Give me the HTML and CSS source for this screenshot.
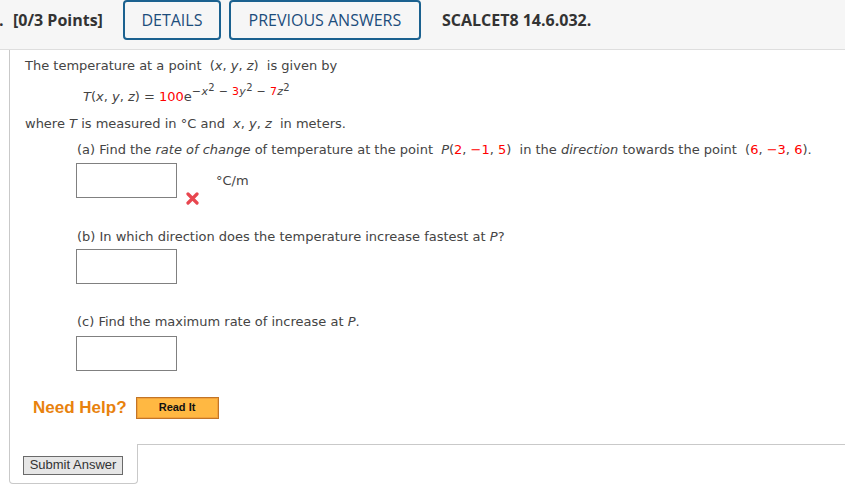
FILE: index.html
```html
<!DOCTYPE html>
<html>
<head>
<meta charset="utf-8">
<link rel="stylesheet" href="styles.css">
</head>
<body>
<div class="header">
  <span class="qnum">.</span>
  <span class="points">[0/3 Points]</span>
  <span class="hbtn btn-details">DETAILS</span>
  <span class="hbtn btn-prev">PREVIOUS ANSWERS</span>
  <span class="ref">SCALCET8 14.6.032.</span>
</div>
<div class="question">
  <div class="content">
    <p class="line line1">The temperature at a point <span class="m">(<i>x</i>, <i>y</i>, <i>z</i>)</span> is given by</p>
    <p class="line formula"><span class="m"><i>T</i>(<i>x</i>, <i>y</i>, <i>z</i>) = <span class="red">100</span>e<sup class="exp">−<i>x</i><sup class="sq">2</sup> − <span class="red">3</span><i>y</i><sup class="sq">2</sup> − <span class="red">7</span><i>z</i><sup class="sq">2</sup></sup></span></p>
    <p class="line line3">where <i>T</i> is measured in °C and <span class="m"><i>x</i>, <i>y</i>, <i>z</i></span> in meters.</p>
    <div class="part part-a">
      <p class="line">(a) Find the <i>rate of change</i> of temperature at the point <span class="m"><i>P</i>(<span class="red">2</span>, <span class="red">−1</span>, <span class="red">5</span>)</span> in the <i>direction</i> towards the point <span class="m m-end">(<span class="red">6</span>, <span class="red">−3</span>, <span class="red">6</span>)</span>.</p>
      <div class="answer-row">
        <span class="answer-box"></span>
        <svg class="xmark" width="13" height="13" viewBox="0 0 13 13"><path d="M2 2 L11 11 M11 2 L2 11" stroke="#e8464f" stroke-width="3.2" stroke-linecap="round"/></svg>
        <span class="unit">°C/m</span>
      </div>
    </div>
    <div class="part part-b">
      <p class="line">(b) In which direction does the temperature increase fastest at <i>P</i>?</p>
      <div class="answer-row">
        <span class="answer-box"></span>
      </div>
    </div>
    <div class="part part-c">
      <p class="line">(c) Find the maximum rate of increase at <i>P</i>.</p>
      <div class="answer-row">
        <span class="answer-box"></span>
      </div>
    </div>
    <div class="help">
      <span class="need-help">Need Help?</span>
      <span class="read-it">Read It</span>
    </div>
  </div>
  <div class="footer">
    <div class="footer-left">
      <span class="submit">Submit Answer</span>
    </div>
    <div class="footer-right"></div>
  </div>
</div>
</body>
</html>
```

FILE: styles.css
```css
html, body {
  margin: 0;
  padding: 0;
  background: #ffffff;
}

.header {
  display: flex;
  align-items: flex-start;
  height: 49px;
  background: #f6f6f6;
  border-bottom: 1px solid #dedede;
  font-family: "Open Sans", sans-serif;
  font-size: 16px;
  color: #333333;
}

.qnum {
  line-height: 40px;
  font-weight: 700;
  margin-left: -1px;
  width: 14px;
}

.points {
  line-height: 40px;
  font-weight: 700;
  margin-right: 20px;
}

.hbtn {
  box-sizing: border-box;
  height: 40px;
  line-height: 36px;
  border: 2px solid #1b618f;
  border-radius: 4px;
  color: #1c4d7c;
  text-align: center;
}

.btn-details {
  width: 98px;
}

.btn-prev {
  margin-left: 8px;
  width: 192px;
}

.ref {
  line-height: 40px;
  font-weight: 700;
  margin-left: 21px;
}

.question {
  margin-left: 9px;
}

.content {
  border-left: 1px solid #c9c9c9;
  padding: 7px 0 25px 15px;
  font-family: "DejaVu Sans", Verdana, sans-serif;
  font-size: 13px;
  color: #444444;
}

.line {
  margin: 0;
  line-height: 18px;
  white-space: nowrap;
}

.m {
  margin: 0 4px;
}

.m-end {
  margin-right: 0;
}

.red {
  color: #ff0000;
}

.formula {
  margin-top: 13px;
  padding-left: 58px;
  font-size: 13px;
}

.formula .m {
  margin: 0;
}

.exp {
  font-size: 11px;
  vertical-align: 6px;
  line-height: 0;
  letter-spacing: 0.3px;
}

.sq {
  font-size: 10px;
  vertical-align: 4px;
  line-height: 0;
}

.line3 {
  margin-top: 9px;
}

.part {
  padding-left: 52px;
}

.part-a {
  margin-top: 8px;
}

.part-b {
  margin-top: 30px;
}

.part-c {
  margin-top: 29px;
}

.answer-row {
  display: flex;
  align-items: center;
  margin-top: 4px;
}

.part-b .answer-row {
  margin-top: 3px;
}

.part-c .answer-row {
  margin-top: 5px;
}

.answer-box {
  display: block;
  box-sizing: border-box;
  width: 101px;
  height: 35px;
  margin-left: -1px;
  border: 1px solid #808080;
  background: #ffffff;
}

.xmark {
  align-self: flex-end;
  margin-left: 9px;
  margin-bottom: -7px;
}

.unit {
  margin-left: 17px;
  margin-top: -1px;
}

.help {
  display: flex;
  align-items: center;
  margin-top: 26px;
  margin-left: 8px;
}

.need-help {
  font-family: "Liberation Sans", Arial, sans-serif;
  font-weight: 700;
  font-size: 17px;
  color: #e8820e;
}

.read-it {
  box-sizing: border-box;
  margin-left: 9px;
  width: 83px;
  height: 22px;
  line-height: 18px;
  text-align: center;
  border: 1px solid #c27526;
  box-shadow: inset 0 0 0 1px #f3a23a;
  background: #ffb842;
  font-family: "Liberation Sans", Arial, sans-serif;
  font-weight: 700;
  font-size: 11px;
  color: #111111;
}

.footer {
  display: flex;
}

.footer-left {
  box-sizing: border-box;
  width: 129px;
  height: 40px;
  border-left: 1px solid #c9c9c9;
  border-right: 1px solid #c9c9c9;
  border-bottom: 1px solid #c9c9c9;
  border-radius: 0 0 4px 4px;
  padding: 11px 0 0 13px;
}

.footer-right {
  flex: 1;
  border-top: 1px solid #c9c9c9;
}

.submit {
  display: inline-block;
  box-sizing: border-box;
  height: 19px;
  width: 100px;
  line-height: 16px;
  text-align: center;
  border: 1px solid #6a6a6a;
  background: #e6e6e6;
  font-family: "Liberation Sans", Arial, sans-serif;
  font-size: 13px;
  color: #333333;
}
```
